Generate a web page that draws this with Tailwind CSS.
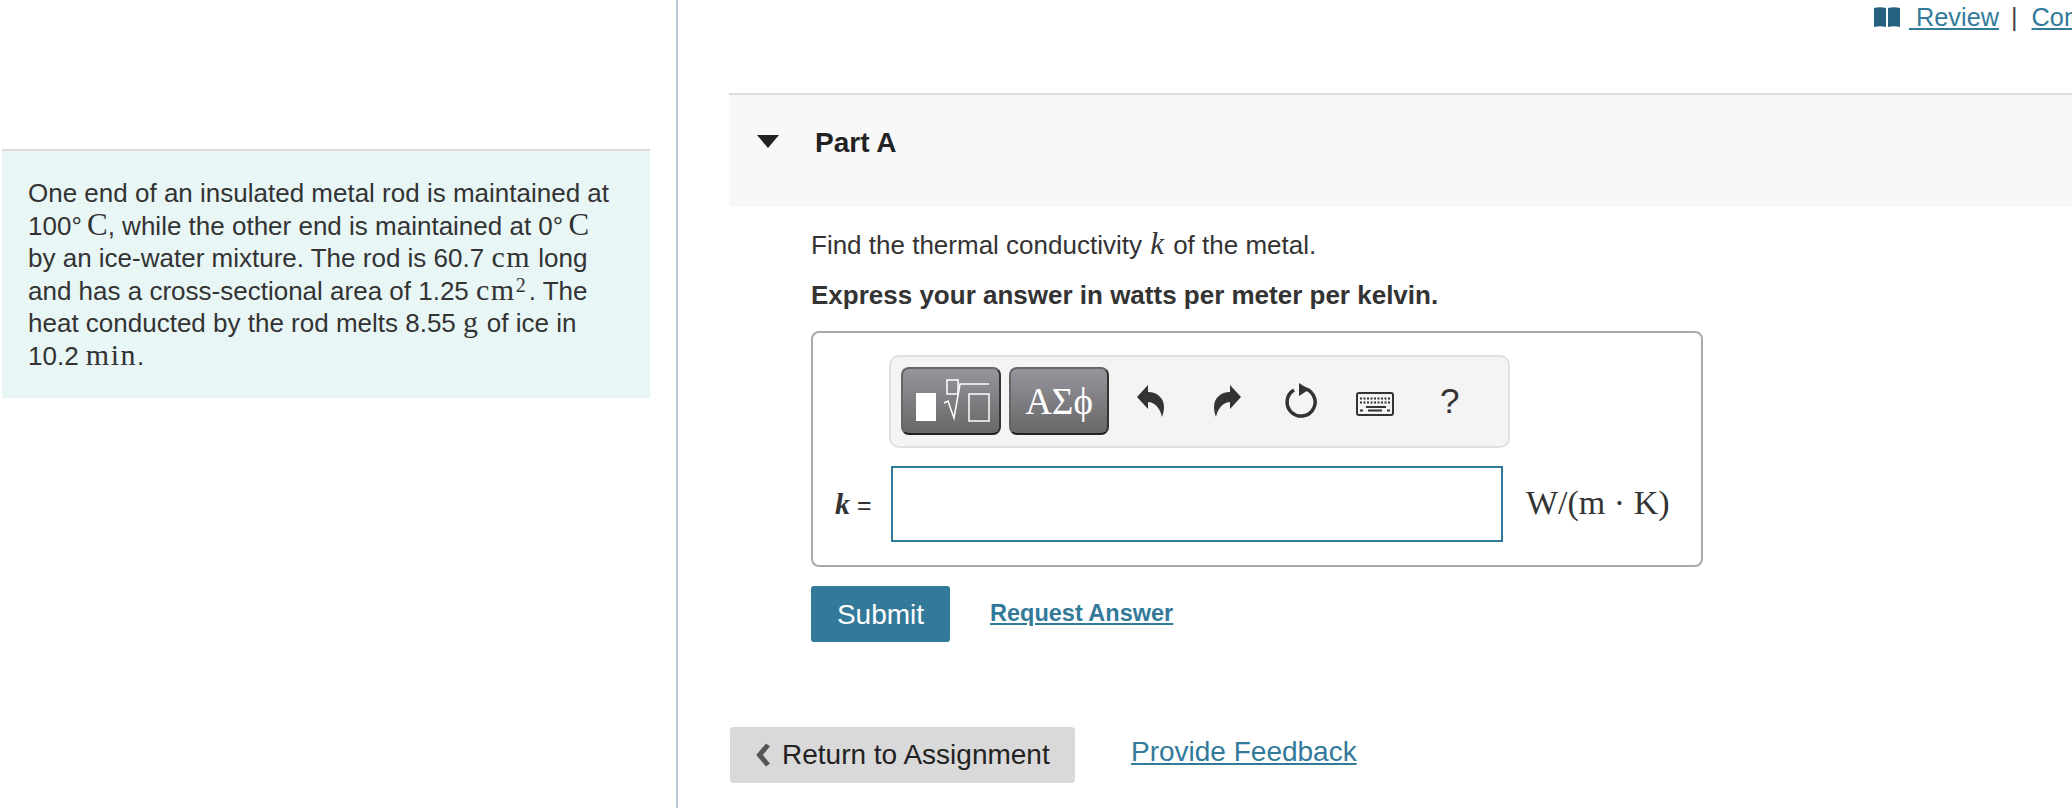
<!doctype html>
<html lang="en">

<head>
  <meta charset="UTF-8" />
  <title>Part A</title>
  <script src="https://cdn.jsdelivr.net/npm/@tailwindcss/browser@4"></script>
</head>

<body class="bg-white h-[808px] overflow-hidden font-['Liberation_Sans',sans-serif] text-[#333]">
  <div class="flex h-[808px]">
    <!-- Left column: problem statement -->
    <div class="w-[678px] shrink-0 border-r-2 border-[#bccadd] pt-[149px] pl-[2px] pr-[26px]">
      <div class="h-[249px] bg-[#e8f6f6] border-t-2 border-[#ddd] pt-[26px] pl-[26px] text-[26px] leading-[32.500px]">
        <p class="whitespace-nowrap">
          One end of an insulated metal rod is maintained at<br>
          100°&thinsp;<span class="font-['Liberation_Serif',serif] text-[31px] leading-[0]">C</span>, while the other end is maintained at 0°&thinsp;<span class="font-['Liberation_Serif',serif] text-[31px] leading-[0]">C</span><br>
          by an ice-water mixture. The rod is 60.7 <span class="font-['Liberation_Serif',serif] text-[30px] leading-[0] tracking-[1.500px]">cm</span> long<br>
          and has a cross-sectional area of 1.25 <span class="font-['Liberation_Serif',serif] text-[30px] leading-[0] tracking-[1.500px]">cm</span><span class="font-['Liberation_Serif',serif] relative -top-[8px] text-[20px] leading-[0] mr-[3px]">2</span>. The<br>
          heat conducted by the rod melts 8.55 <span class="font-['Liberation_Serif',serif] text-[30px] leading-[0] tracking-[1.500px]">g</span> of ice in<br>
          10.2 <span class="font-['Liberation_Serif',serif] text-[30px] leading-[0] tracking-[1.500px]">min</span>.
        </p>
      </div>
    </div>

    <!-- Right column -->
    <div class="flex-1 min-w-0 overflow-hidden pl-[51px]">
      <!-- Top links -->
      <div class="h-[93px] pt-[2px] flex items-start whitespace-nowrap text-[25.300px] leading-[30px] text-[#337a9a]">
        <svg class="ml-[1144px] mt-[5px] shrink-0" width="28" height="20" viewBox="0 0 28 20">
          <path fill="#25617e" d="M1 1c4-1 8-1 12 0v19c-4-1-8-1-12 0zM15 1c4-1 8-1 12 0v19c-4-1-8-1-12 0z" />
        </svg>
        <a class="underline ml-[8px]">&nbsp;Review</a>
        <span class="text-[#444] ml-[12px]">|</span>
        <a class="underline ml-[14px]">Constants</a>
      </div>

      <!-- Part header -->
      <div class="h-[114px] bg-[#f8f8f8] border-t-2 border-[#ddd] flex items-start pt-[32px]">
        <svg class="ml-[28px] mt-[8px] shrink-0" width="22" height="13" viewBox="0 0 22 13">
          <path fill="#222" d="M0 0h22L11 13z" />
        </svg>
        <h2 class="ml-[36px] font-bold text-[28px] leading-[32px] text-[#222]">Part A</h2>
      </div>

      <div class="pl-[82px]">
        <p class="mt-[22px] text-[26px] leading-[32px]">Find the thermal conductivity <span class="font-['Liberation_Serif',serif] italic text-[31px] leading-[0] ml-[1px] mr-[2px]">k</span> of the metal.</p>
        <p class="mt-[18px] text-[26px] leading-[32px] font-bold">Express your answer in watts per meter per kelvin.</p>

        <!-- Answer box -->
        <div class="mt-[20px] w-[892px] h-[236px] border-2 border-[#aaa] rounded-[8px] pt-[22px] pl-[76px]">
          <!-- Toolbar -->
          <div class="w-[621px] h-[93px] bg-[#f4f4f4] border-2 border-[#e0e0e0] rounded-[10px] pt-[10px] pl-[10px] flex items-start">
            <div class="w-[100px] h-[68px] rounded-[8px] border-2 border-[#666] border-b-[#222] border-r-[#333] bg-gradient-to-b from-[#96959d] to-[#686868] flex items-center justify-center">
              <svg class="ml-[4px]" width="76" height="44" viewBox="0 0 76 44" fill="none" stroke="#fff" stroke-width="1.500">
                <rect x="1" y="14" width="20" height="28" fill="#fff" stroke="none" />
                <rect x="32" y="1" width="11" height="14" />
                <path d="M29 24l4-2 6 17 6-34h29" />
                <rect x="54" y="15" width="20" height="27" />
              </svg>
            </div>
            <div class="ml-[8px] w-[100px] h-[68px] rounded-[8px] border-2 border-[#666] border-b-[#222] border-r-[#333] bg-gradient-to-b from-[#96959d] to-[#686868] flex items-center justify-center font-['Liberation_Serif',serif] text-white text-[37px] leading-none">ΑΣϕ</div>
            <!-- undo -->
            <svg class="ml-[28px] mt-[18px] shrink-0" width="27" height="32" viewBox="0 0 27 32">
              <path fill="#333" d="M0 12 11 0v7c9 0 16 6 16 15 0 4-1 7-2 10-1-5-5-15-14-15v7z" />
            </svg>
            <!-- redo -->
            <svg class="ml-[50px] mt-[18px] shrink-0" width="27" height="32" viewBox="0 0 27 32">
              <path fill="#333" d="M27 12 16 0v7C7 7 0 13 0 22c0 4 1 7 2 10 1-5 5-15 14-15v7z" />
            </svg>
            <!-- reset -->
            <svg class="ml-[42px] mt-[15px] shrink-0" width="36" height="38" viewBox="0 0 36 38" fill="none">
              <path stroke="#333" stroke-width="3.500" d="M11 8A14 14 0 1 0 20 6.200" />
              <path fill="#333" d="M16 1l10 6.500-10 6.500z" />
            </svg>
            <!-- keyboard -->
            <svg class="ml-[37px] mt-[25px] shrink-0" width="38" height="24" viewBox="0 0 38 24" fill="none">
              <rect x="1" y="1" width="36" height="22" rx="2" stroke="#333" stroke-width="2" />
              <path stroke="#333" stroke-width="2" stroke-dasharray="2 1.500" d="M4 6.500h30M4 10.500h30" />
              <path stroke="#333" stroke-width="2" d="M10 15h20M4 18.500h3M31 18.500h3M12 18.500h14" />
            </svg>
            <span class="ml-[46px] mt-[15px] text-[35px] leading-[38px] text-[#333]">?</span>
          </div>

          <!-- Input row -->
          <div class="mt-[18px] -ml-[76px] flex items-center">
            <span class="w-[78px] pl-[22px] whitespace-nowrap text-[25px] leading-[30px]"><span class="font-['Liberation_Serif',serif] italic font-bold text-[30px]">k</span> =</span>
            <div class="w-[612px] h-[76px] border-2 border-[#337a9a] bg-white"></div>
            <span class="ml-[23px] -mt-[2px] whitespace-nowrap font-['Liberation_Serif',serif] text-[34px] leading-[36px]">W/(m · K)</span>
          </div>
        </div>

        <!-- Actions -->
        <div class="mt-[19px] flex items-center">
          <button class="w-[139px] h-[56px] bg-[#337a9a] rounded-[3px] text-white text-[28px] pt-[1px]">Submit</button>
          <a class="ml-[40px] font-bold text-[23.500px] text-[#337a9a] underline">Request Answer</a>
        </div>
      </div>

      <!-- Footer -->
      <div class="mt-[85px] flex items-start">
        <button class="ml-[1px] w-[345px] h-[56px] bg-[#d9d9d9] rounded-[4px] flex items-center pl-[26px] text-[28px] text-[#222]">
          <svg class="shrink-0" width="14" height="24" viewBox="0 0 14 24">
            <path fill="none" stroke="#555" stroke-width="5" d="M12 2 3.500 12 12 22" />
          </svg>
          <span class="ml-[12px]">Return to Assignment</span>
        </button>
        <a class="ml-[56px] mt-[8px] text-[28px] leading-[34px] text-[#337a9a] underline">Provide Feedback</a>
      </div>
    </div>
  </div>
</body>

</html>
